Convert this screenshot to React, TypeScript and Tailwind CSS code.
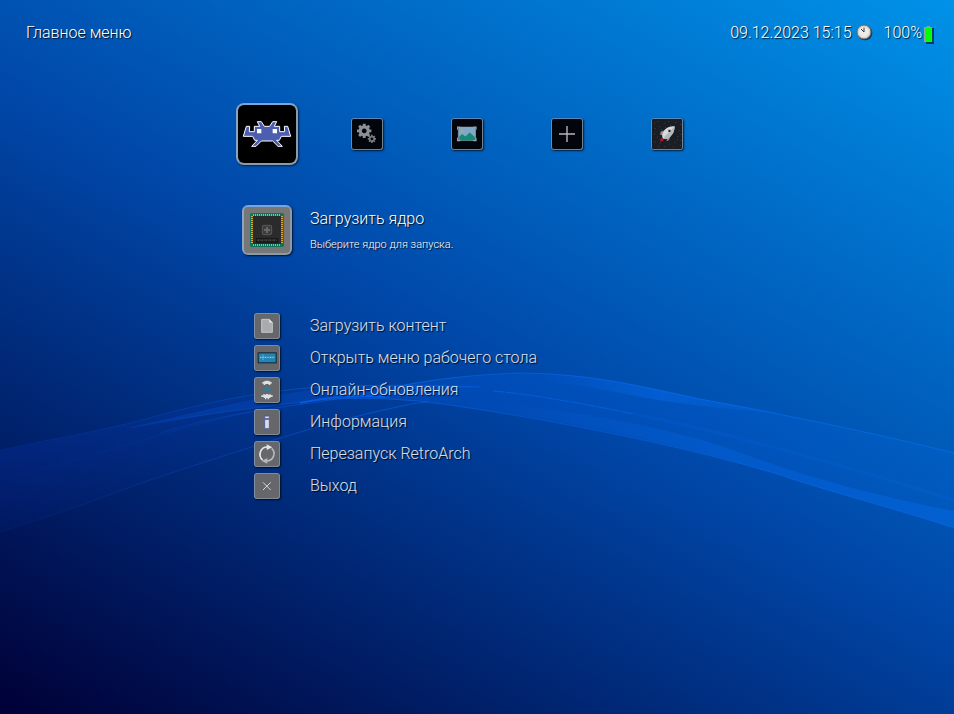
import type { ReactNode } from "react";

const textShadow = "[text-shadow:1px_1px_1px_rgba(0,0,0,0.85)]";

function gearPath(cx: number, cy: number, outer: number, inner: number, teeth: number) {
  const points: string[] = [];
  const step = (Math.PI * 2) / teeth;
  for (let i = 0; i < teeth; i++) {
    const a = i * step - Math.PI / 2;
    const corners: [number, number][] = [
      [inner, -0.34],
      [outer, -0.24],
      [outer, 0.24],
      [inner, 0.34],
    ];
    for (const [r, o] of corners) {
      points.push(`${cx + r * Math.cos(a + o * step)} ${cy + r * Math.sin(a + o * step)}`);
    }
  }
  return `M${points.join("L")}Z`;
}

function Waves() {
  return (
    <svg
      className="absolute inset-0 h-full w-full"
      viewBox="0 0 954 714"
      preserveAspectRatio="none"
      fill="none"
      aria-hidden="true"
    >
      <defs>
        <linearGradient id="ribbon" x1="0" x2="1" y1="0" y2="0">
          <stop offset="0" stopColor="#0060f0" stopOpacity="0.28" />
          <stop offset="0.4" stopColor="#0060e8" stopOpacity="0.24" />
          <stop offset="1" stopColor="#0068e0" stopOpacity="0.2" />
        </linearGradient>
        <linearGradient id="fade" x1="0" x2="40" y1="435" y2="535" gradientUnits="userSpaceOnUse">
          <stop offset="0" stopColor="#0838c0" stopOpacity="0.26" />
          <stop offset="1" stopColor="#0838c0" stopOpacity="0.04" />
        </linearGradient>
        <linearGradient id="edge" x1="0" x2="954" y1="0" y2="0" gradientUnits="userSpaceOnUse">
          <stop offset="0" stopColor="#0848d0" stopOpacity="0.15" />
          <stop offset="0.2" stopColor="#0858e8" stopOpacity="0.4" />
          <stop offset="0.38" stopColor="#0870ff" stopOpacity="0.75" />
          <stop offset="0.55" stopColor="#0870ff" stopOpacity="0.4" />
          <stop offset="0.75" stopColor="#0870ff" stopOpacity="0.55" />
          <stop offset="1" stopColor="#0a78ff" stopOpacity="0.45" />
        </linearGradient>
        <linearGradient id="tail" x1="480" x2="954" y1="0" y2="0" gradientUnits="userSpaceOnUse">
          <stop offset="0" stopColor="#0870f8" stopOpacity="0" />
          <stop offset="0.5" stopColor="#0870f8" stopOpacity="0.25" />
          <stop offset="1" stopColor="#0870f8" stopOpacity="0.35" />
        </linearGradient>
        <linearGradient id="crest" x1="540" x2="780" y1="0" y2="0" gradientUnits="userSpaceOnUse">
          <stop offset="0" stopColor="#0870f8" stopOpacity="0" />
          <stop offset="0.5" stopColor="#0870f8" stopOpacity="0.35" />
          <stop offset="1" stopColor="#0870f8" stopOpacity="0.1" />
        </linearGradient>
      </defs>
      <path
        fill="url(#fade)"
        d="M0 450C55 438 110 430 160 415C220 399 280 390 340 387L440 386L430 402C320 424 200 465 100 498C60 513 25 524 0 532Z"
      />
      <path
        fill="url(#ribbon)"
        d="M340 397C390 388 440 376 525 373C590 374 640 386 700 399C770 412 880 434 954 453V528C900 510 830 492 780 475C700 450 560 420 428 402C400 399 370 397 340 397Z"
      />
      <path
        fill="#0860e8"
        fillOpacity="0.22"
        d="M130 427C200 412 270 391 350 387C390 386 440 384 480 387C430 390 380 396 330 399C260 405 190 418 130 427Z"
      />
      <path
        fill="url(#tail)"
        d="M480 402C580 410 680 430 744 454C800 475 867 494 954 511V528C900 510 830 492 780 475C700 450 580 422 480 409Z"
      />
      <path
        fill="url(#crest)"
        d="M540 373C600 375 650 388 700 399C730 404 760 409 780 413C730 410 680 404 640 397C610 391 580 384 540 381Z"
      />
      <g stroke="url(#edge)" strokeWidth="1">
        <path d="M0 450C55 438 110 430 160 415C220 399 280 388 340 386C390 385 440 385 480 387" strokeOpacity="0.7" />
        <path d="M400 386C430 380 475 374 525 373C590 374 640 386 700 399C770 412 880 434 954 453" />
        <path d="M0 532C60 514 100 498 150 480C220 457 300 430 370 413C390 409 410 403 428 402" strokeOpacity="0.6" />
        <path d="M428 402C560 420 700 450 780 475C830 492 900 510 954 528" strokeOpacity="0.7" />
        <path d="M130 428C200 414 260 407 320 400C350 397 390 398 428 402" strokeOpacity="0.7" />
        <path d="M160 433C230 412 280 408 330 400C350 397 370 396 390 397" strokeOpacity="0.6" />
        <path d="M493 391C530 394 580 403 634 414" strokeDasharray="12 1" />
        <path d="M634 414C720 431 850 467 954 500" strokeOpacity="0.2" strokeWidth="3" />
        <path d="M0 480C100 455 160 432 250 412" strokeOpacity="0.3" />
      </g>
      <path stroke="#0a68ff" strokeOpacity="0.6" strokeWidth="2" d="M300 403C330 397 350 394 385 397" />
    </svg>
  );
}

function Invader() {
  return (
    <svg className="h-full w-full" viewBox="54 45 174 174" aria-hidden="true">
      <path
        fill="#4c5eaf"
        stroke="#fff"
        strokeWidth="3"
        d="M112 95H124L133 109H149L158 95H170L163 109H179V125H194L193 109H203L212 139H184L178 151H170L187 169H174L158 153H124L108 169H95L112 151H104L98 139H70L79 109H89L88 125H103V109H119Z"
      />
      <path fill="#fff" d="M111 117H124V130H111ZM158 117H171V130H158Z" />
    </svg>
  );
}

function Gears() {
  return (
    <svg className="h-full w-full" viewBox="399 90 86 86" fillRule="evenodd" aria-hidden="true">
      <path fill="#8d9194" d={gearPath(434, 124, 21, 16, 8) + "M434 117a7 7 0 1 0 .1 0Z"} />
      <path fill="#777b7e" d={gearPath(456, 147, 12, 9, 8) + "M456 143a4 4 0 1 0 .1 0Z"} />
    </svg>
  );
}

function Picture() {
  return (
    <svg className="h-full w-full" viewBox="68 59 86 86" aria-hidden="true">
      <path fill="#82a8c8" d="M86 82H136V121H86Z" />
      <circle cx="97" cy="94" r="3" fill="#c8b040" />
      <path fill="#168a74" d="M89 120V109L97 102L106 109L119 98L134 111V120Z" />
      <path
        fill="none"
        stroke="#a4a8aa"
        strokeWidth="3"
        d="M84 90V82H92M129 82H137V90M137 113V121H129M92 121H84V113"
      />
      <path stroke="#8ba3b4" strokeWidth="1.5" d="M86 90V114M135 90V114M92 82H129" />
    </svg>
  );
}

function Plus() {
  return (
    <svg className="h-full w-full" viewBox="368 59 86 86" aria-hidden="true">
      <path stroke="#b5b7ba" strokeWidth="4" d="M388 102H434M411 79V125" />
    </svg>
  );
}

const stars = [
  [674, 70], [684, 65], [702, 70], [715, 65], [736, 68], [748, 74], [676, 85],
  [688, 80], [706, 82], [745, 92], [674, 101], [683, 110], [741, 108], [750, 102],
  [676, 124], [686, 136], [704, 137], [718, 130], [733, 126], [728, 138], [748, 134],
  [694, 88], [721, 76], [750, 120], [690, 127], [740, 118],
];

function Rocket() {
  return (
    <svg className="h-full w-full bg-[#1a1d24]" viewBox="668 59 86 86" aria-hidden="true">
      {stars.map(([x, y]) => (
        <rect key={`${x}-${y}`} x={x} y={y} width="2" height="2" fill="#62666e" />
      ))}
      <path fill="#888b90" d="M702 92L693 95L691 104L701 106ZM711 112L710 123L717 119L721 108Z" />
      <path fill="#d8dadd" d="M733 80C720 80 708 83 701 95C697 102 696 109 699 115C706 118 714 116 720 110C730 101 732 92 733 80Z" />
      <path fill="#b4b8bc" d="M733 80C732 92 730 101 720 110C714 116 706 118 699 115Z" />
      <path fill="#202530" d="M715 90H721V96H715Z" />
      <path fill="#d01010" d="M696 113L702 119L693 125L691 118Z" />
    </svg>
  );
}

function Chip() {
  return (
    <svg className="h-full w-full" viewBox="42 35 138 138" aria-hidden="true">
      <rect x="60" y="53" width="102" height="102" rx="5" fill="#10745c" />
      <path
        fill="none"
        stroke="#d8a83c"
        strokeWidth="6"
        strokeDasharray="3 3"
        d="M69 59H153M69 149H153M66 62V146M156 62V146"
      />
      <path fill="#2b2b2b" d="M69 62H153V146H69Z" />
      <rect x="97" y="90" width="28" height="28" rx="5" fill="#3c3c3c" stroke="#5b5b5b" strokeWidth="3" />
      <path stroke="#686868" strokeWidth="6" d="M102 104H120M111 95V113" />
      <path fill="#181818" d="M78 128H145V143H78Z" />
      <path stroke="#444" strokeWidth="6" strokeDasharray="5 2 3 2" d="M82 135H141" />
    </svg>
  );
}

function FileIcon() {
  return (
    <svg className="h-full w-full" viewBox="45 27 72 72" aria-hidden="true">
      <path fill="#a8abb0" stroke="#d0d2d6" strokeWidth="2.5" d="M65 43H88L97 52V82H65Z" />
      <path fill="#d8dadd" d="M87 43L98 53H87Z" />
    </svg>
  );
}

function DesktopIcon() {
  return (
    <svg className="h-full w-full" viewBox="45 123 72 72" aria-hidden="true">
      <rect x="53" y="142" width="57" height="33" fill="#10242f" />
      <rect x="56" y="145" width="51" height="27" fill="#2484b4" />
      <path stroke="#c4dce8" strokeWidth="3" strokeDasharray="3 2" d="M60 157H104" />
      <path stroke="#8cc4dd" strokeWidth="2" d="M69 149V165" />
    </svg>
  );
}

function UpdateIcon() {
  return (
    <svg className="h-full w-full" viewBox="45 219 72 72" aria-hidden="true">
      <path fill="#dedfe2" d="M71 229H76V227H86V229H91V231H95V236H91V240H86V237H76V240H71V236H67V231H71Z" />
      <path fill="none" stroke="#1f83b0" strokeWidth="3" d="M76 248Q81 244 86 248M71 254Q81 247 91 254M66 260Q81 252 96 260" />
      <path
        fill="#dedfe2"
        d="M70 267H74V270H77V267H85V270H88V267H92V271H98V276H91V279H87V283H83V279H79V283H75V279H71V276H64V271H70Z"
      />
    </svg>
  );
}

function InfoIcon() {
  return (
    <svg className="h-full w-full" viewBox="45 30 72 72" aria-hidden="true">
      <path fill="#dadce4" stroke="#4a5698" strokeWidth="2.5" d="M74 48H88V56H74ZM74 58H88V86H74Z" />
    </svg>
  );
}

function RestartIcon() {
  return (
    <svg className="h-full w-full" viewBox="45 126 72 72" fill="none" aria-hidden="true">
      <path stroke="#e4e5e7" strokeWidth="5" d="M68 180A22 22 0 0 1 82 141" />
      <path fill="#e4e5e7" d="M80 133L97 142L80 150Z" />
      <path stroke="#b4b7bb" strokeWidth="5" d="M95 145A22 22 0 0 1 80 183" />
      <path fill="#b4b7bb" d="M82 174V191L65 183Z" />
    </svg>
  );
}

function CloseIcon() {
  return (
    <svg className="h-full w-full" viewBox="45 222 72 72" aria-hidden="true">
      <path stroke="#d8dadd" strokeWidth="3" d="M69 247L92 270M92 247L69 270" />
    </svg>
  );
}

function Clock() {
  return (
    <svg className="h-[18px] w-[18px]" viewBox="470 42 54 54" aria-hidden="true">
      <circle cx="497" cy="69" r="22" fill="#101820" fillOpacity="0.7" />
      <circle cx="494" cy="66" r="21" fill="#d8d4d0" stroke="#6c6462" strokeWidth="3" />
      <circle cx="494" cy="66" r="15" fill="#eeecea" />
      <path fill="none" stroke="#383838" strokeWidth="3" d="M485 57L494 66V53" />
    </svg>
  );
}

function Battery() {
  return (
    <svg className="mt-1 h-[18px] w-[10px]" viewBox="0 0 10 18" aria-hidden="true">
      <path fill="#082848" fillOpacity="0.8" d="M2 2H10V18H2Z" />
      <path fill="#8fa0a0" d="M3 0H6V1H8V16H0V1H3Z" />
      <path fill="#00ff00" d="M1 2H7V15H1Z" />
    </svg>
  );
}

const tabs: { label: string; icon: ReactNode }[] = [
  { label: "Настройки", icon: <Gears /> },
  { label: "Изображения", icon: <Picture /> },
  { label: "Добавить", icon: <Plus /> },
  { label: "Обзор", icon: <Rocket /> },
];

const entries: { label: string; icon: ReactNode }[] = [
  { label: "Загрузить контент", icon: <FileIcon /> },
  { label: "Открыть меню рабочего стола", icon: <DesktopIcon /> },
  { label: "Онлайн-обновления", icon: <UpdateIcon /> },
  { label: "Информация", icon: <InfoIcon /> },
  { label: "Перезапуск RetroArch", icon: <RestartIcon /> },
  { label: "Выход", icon: <CloseIcon /> },
];

export default function App() {
  return (
    <div className="relative min-h-screen overflow-hidden bg-linear-[29deg] from-[#000036] via-[#0047a8] to-[#0092e8] font-['Roboto','Noto_Sans',sans-serif] text-base font-light text-white">
      <Waves />
      <div className={`relative ${textShadow}`}>
        <header className="flex h-[66px] items-center justify-between pr-5 pl-[26px]">
          <h1>Главное меню</h1>
          <div className="flex items-center">
            <time dateTime="2023-12-09T15:15">09.12.2023 15:15</time>
            <span className="ml-1">
              <Clock />
            </span>
            <span className="ml-[10px]">100%</span>
            <span className="ml-0.5">
              <Battery />
            </span>
          </div>
        </header>

        <nav className="mt-[37px] flex items-center pl-[217px]">
          <div className="flex w-[100px] justify-center">
            <button
              aria-label="Главное меню"
              className="h-[62px] w-[62px] overflow-hidden rounded-lg border-2 border-t-[#7ba4d8] border-r-[#8d9aa8] border-b-[#8d9aa8] border-l-[#8aa4c4] bg-black shadow-[1px_1px_2px_rgba(0,0,0,0.6)]"
            >
              <Invader />
            </button>
          </div>
          {tabs.map((tab) => (
            <div key={tab.label} className="flex w-[100px] justify-center">
              <button
                aria-label={tab.label}
                className="h-8 w-8 overflow-hidden rounded-[3px] border border-t-[#5b86b8] border-r-[#74808c] border-b-[#74808c] border-l-[#6d87a4] bg-[#02060c] shadow-[1px_1px_2px_rgba(0,0,0,0.7)]"
              >
                {tab.icon}
              </button>
            </div>
          ))}
        </nav>

        <main className="mt-10 pl-[224px]">
          <button className={`flex items-center text-left ${textShadow}`}>
            <span className="flex w-[86px] justify-center">
              <span className="h-[50px] w-[50px] overflow-hidden rounded-md border-2 border-t-[#7ba4d8] border-r-[#8d9aa8] border-b-[#8d9aa8] border-l-[#8aa4c4] bg-[#777] shadow-[1px_1px_2px_rgba(0,0,0,0.7)]">
                <Chip />
              </span>
            </span>
            <span className="flex flex-col gap-1 pt-0.5">
              <span className="leading-6">Загрузить ядро</span>
              <span className="text-[11px] leading-5">Выберите ядро для запуска.</span>
            </span>
          </button>

          <ul className="mt-[55px]">
            {entries.map((entry) => (
              <li key={entry.label}>
                <button className={`flex h-8 items-center text-left text-white/85 ${textShadow}`}>
                  <span className="flex w-[86px] justify-center">
                    <span className="h-[26px] w-[26px] overflow-hidden rounded-[3px] border border-t-[#6f8fb8] border-r-[#858a92] border-b-[#858a92] border-l-[#8090a8] bg-[#65676b] shadow-[1px_1px_2px_rgba(0,0,0,0.7)]">
                      {entry.icon}
                    </span>
                  </span>
                  <span>{entry.label}</span>
                </button>
              </li>
            ))}
          </ul>
        </main>
      </div>
    </div>
  );
}
